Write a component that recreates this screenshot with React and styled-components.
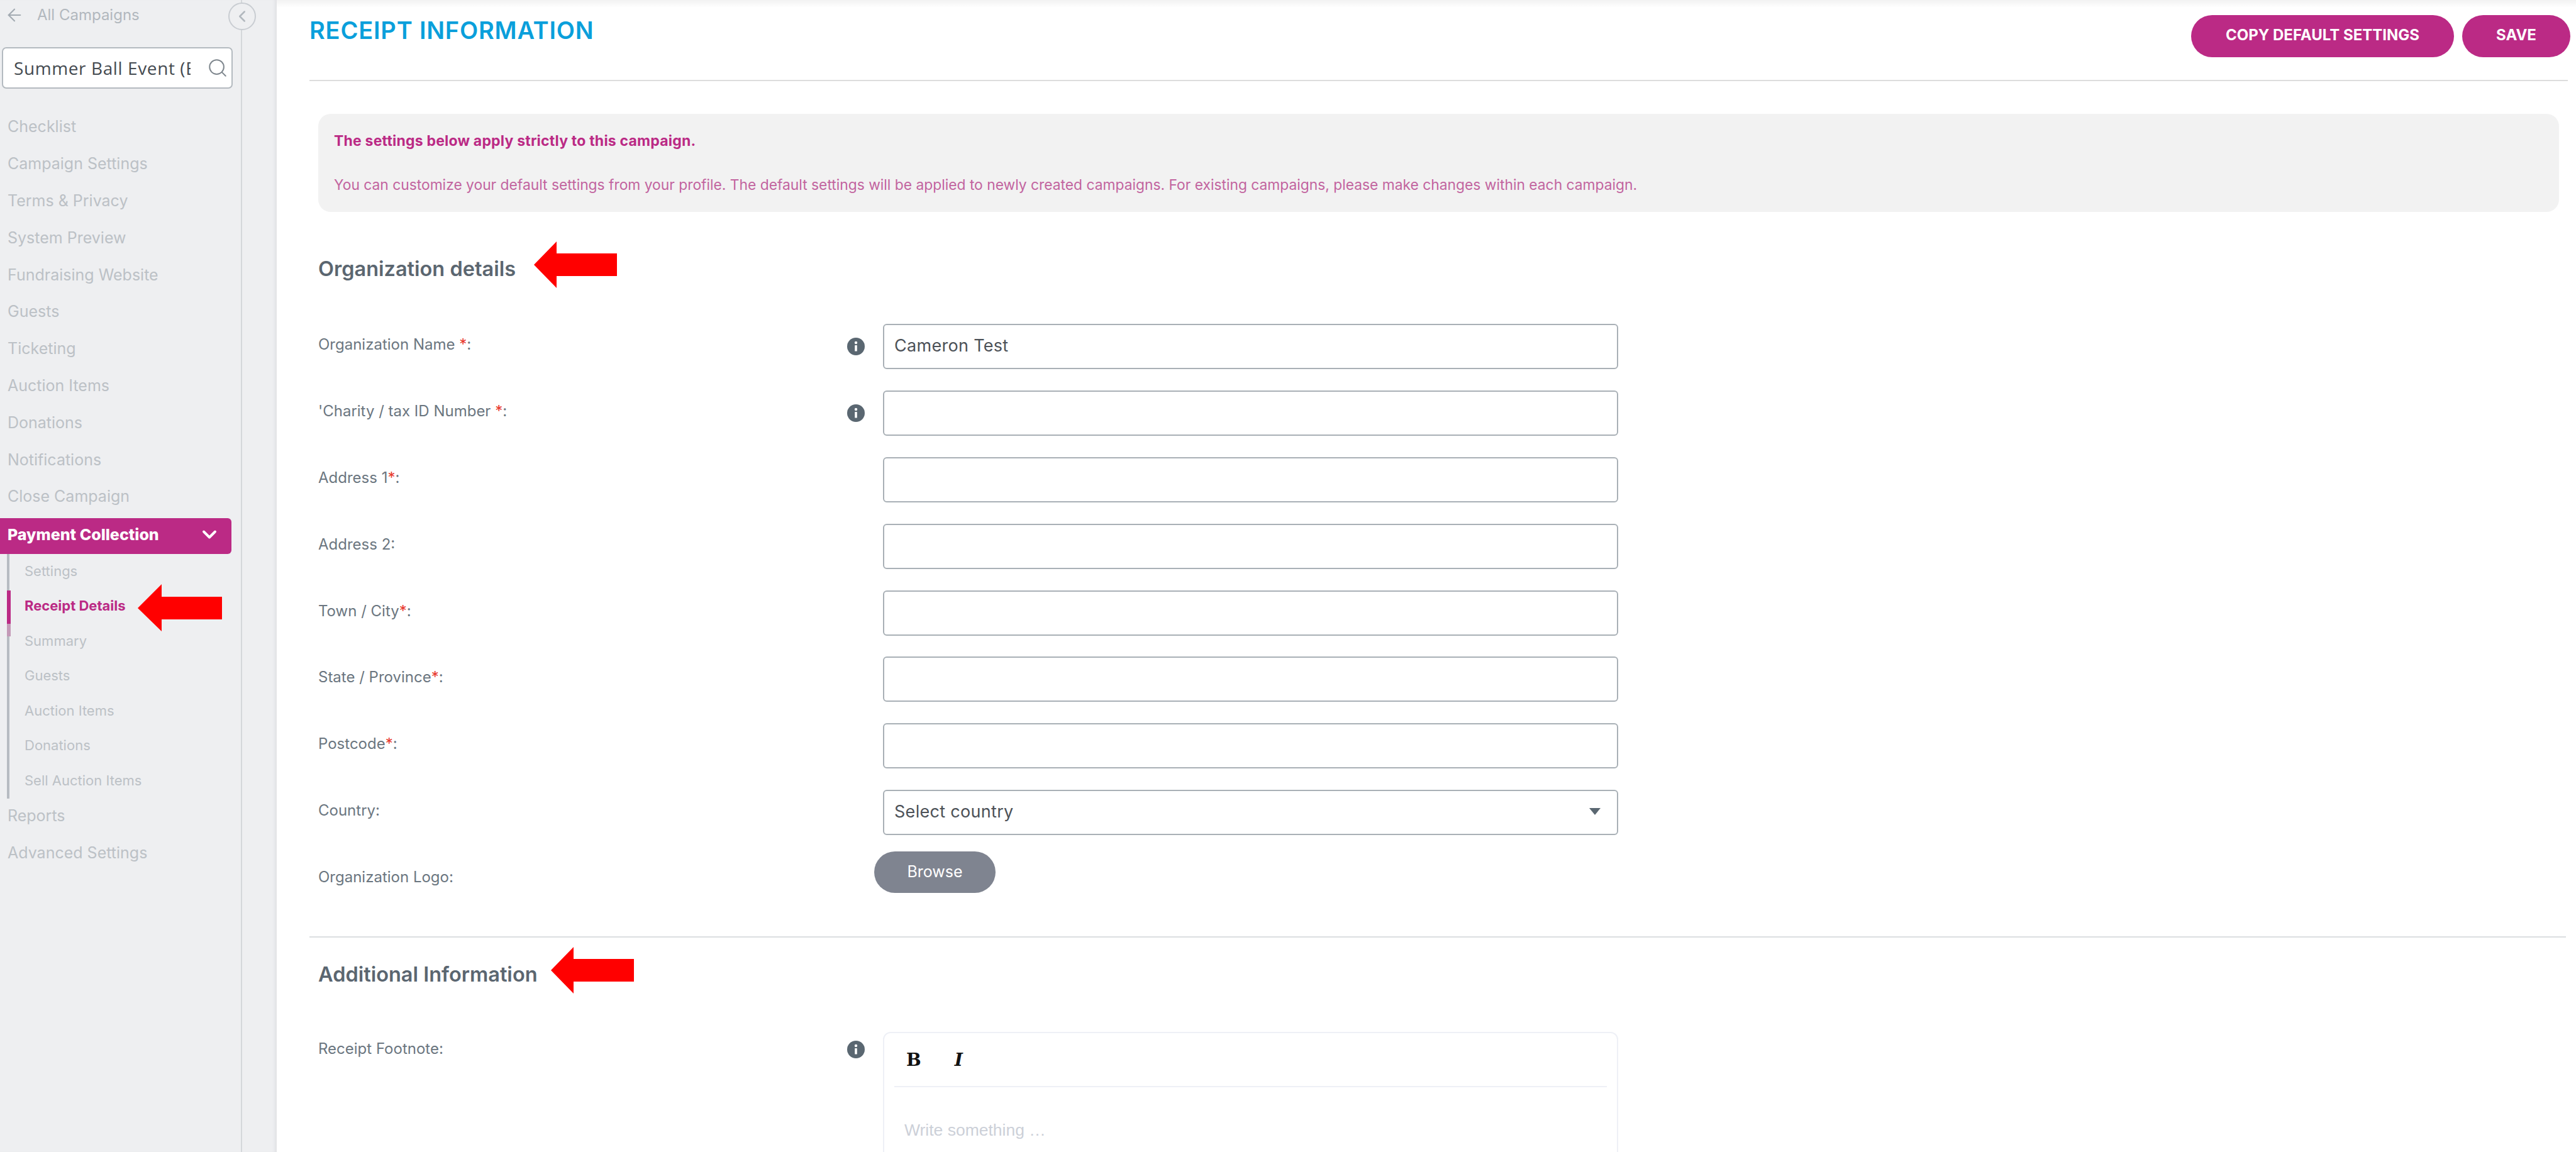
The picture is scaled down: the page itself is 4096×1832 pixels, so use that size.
import React from "react";
import styled, { createGlobalStyle } from "styled-components";
import { ArrowLeft, ChevronLeft, ChevronDown, Search } from "lucide-react";

const Global = createGlobalStyle`
  html, body { margin: 0; padding: 0; background: #fff; }
  * { box-sizing: border-box; }
  body { font-family: Inter, "Liberation Sans", sans-serif; }
`;

const Page = styled.div`
  position: relative;
  display: flex;
  width: 4096px;
  height: 1832px;
  overflow: hidden;
  background: #fff;
  &::before {
    content: "";
    position: absolute;
    left: 0;
    right: 0;
    top: 0;
    height: 12px;
    background: linear-gradient(rgba(0, 0, 0, 0.05), rgba(0, 0, 0, 0));
  }
`;

const Sidebar = styled.aside`
  position: relative;
  flex: none;
  width: 440px;
  background: #eeeff1;
  box-shadow: inset -6px 0 5px -3px #e0e1e4;
`;

const Column = styled.div`
  width: 385px;
  height: 100%;
  border-right: 2px solid #d5d8db;
`;

const Back = styled.div`
  display: flex;
  align-items: center;
  gap: 20px;
  height: 47px;
  padding-left: 7px;
  color: #b2b8be;
  font-size: 24px;
`;

const Collapse = styled.div`
  position: absolute;
  left: 363px;
  top: 4px;
  width: 44px;
  height: 44px;
  display: flex;
  align-items: center;
  justify-content: center;
  border: 2px solid #c9cdd2;
  border-radius: 50%;
  background: #eeeff1;
  color: #b2b8be;
`;

const SearchBox = styled.div`
  display: flex;
  align-items: center;
  justify-content: space-between;
  width: 367px;
  height: 66px;
  margin: 28px 0 31px 3px;
  padding: 0 5px 0 17px;
  background: #fff;
  border: 2px solid #b4bac0;
  border-radius: 7px;
  color: #444a50;
`;

const SearchText = styled.div`
  width: 281px;
  overflow: hidden;
  white-space: nowrap;
  font-family: "Open Sans", sans-serif;
  font-size: 28px;
  letter-spacing: 0.6px;
`;

const NavItem = styled.div`
  display: flex;
  align-items: center;
  height: 58.8px;
  padding-left: 12px;
  color: #bcc1c6;
  font-size: 25px;
`;

const ActiveBar = styled.div`
  display: flex;
  align-items: center;
  justify-content: space-between;
  width: 368px;
  height: 57px;
  margin-top: 5.6px;
  padding: 0 17px 6px 12px;
  background: #bb2a85;
  border-radius: 0 6px 6px 0;
  color: #fff;
  font-size: 25px;
  font-weight: 800;
`;

const SubList = styled.div`
  width: 200px;
  margin: 0 0 -2.5px 11px;
  border-left: 4px solid #b7bcc2;
`;

const SubItem = styled.div`
  position: relative;
  display: flex;
  align-items: center;
  height: 55.5px;
  padding: 0 0 3px 24px;
  white-space: nowrap;
  color: ${(p) => (p.$active ? "#bb2a85" : "#bcc1c6")};
  font-size: 22px;
  font-weight: ${(p) => (p.$active ? 700 : 400)};
  ${(p) =>
    p.$active &&
    `
    &::before {
      content: "";
      position: absolute;
      left: -4px;
      top: 2px;
      bottom: 0;
      width: 6px;
      background: #bb2a85;
    }
    &::after {
      content: "";
      position: absolute;
      left: -4px;
      top: 100%;
      height: 20px;
      width: 6px;
      background: #c49ab8;
    }
  `}
`;

const SideArrow = styled.svg`
  position: absolute;
  left: 219px;
  top: 929px;
`;

const Main = styled.main`
  flex: 1;
  min-width: 0;
  padding: 0 13px 0 52px;
`;

const Header = styled.header`
  display: flex;
  align-items: flex-start;
  justify-content: space-between;
  height: 129px;
  padding-top: 24px;
  border-bottom: 2px solid #dddddd;
`;

const Title = styled.h1`
  margin: 0;
  color: #0a9fdb;
  font-size: 38px;
  font-weight: 600;
  letter-spacing: 0.8px;
  line-height: 48px;
  white-space: nowrap;
`;

const Actions = styled.div`
  display: flex;
  gap: 13px;
  margin-right: -4px;
`;

const PillButton = styled.button`
  height: 67px;
  width: ${(p) => p.$width}px;
  padding: 0 0 4px;
  border: 0;
  border-radius: 34px;
  background: #bb2a85;
  color: #fff;
  font-family: inherit;
  font-size: 24px;
  font-weight: 700;
`;

const Notice = styled.section`
  display: flex;
  flex-direction: column;
  gap: 42px;
  height: 156px;
  margin: 52px 14px 0;
  padding: 29px 25px 0;
  background: #f2f2f2;
  border-radius: 20px;
  color: #bb2a85;
  line-height: 28px;
`;

const NoticeStrong = styled.div`
  font-size: 23px;
  font-weight: 700;
  letter-spacing: 0.2px;
`;

const NoticeText = styled.div`
  font-size: 22.8px;
  color: #c2649f;
`;

const Heading = styled.h2`
  display: flex;
  align-items: center;
  gap: ${(p) => p.$gap}px;
  height: 40px;
  margin: ${(p) => p.$top}px 0 0 14px;
  color: #5b6670;
  font-size: 32.5px;
  font-weight: 600;
`;

const RedArrow = styled.svg`
  flex: none;
  margin-top: -12px;
`;

const Form = styled.div`
  display: flex;
  flex-direction: column;
  gap: 33.9px;
  margin: ${(p) => p.$top}px 0 0 14px;
`;

const Row = styled.div`
  display: grid;
  grid-template-columns: 841px 57px 1169px;
  align-items: ${(p) => (p.$top ? "start" : "center")};
  margin-top: ${(p) => p.$shift || 0}px;
`;

const Label = styled.div`
  margin-top: ${(p) => p.$offset || -6}px;
  color: #6b7680;
  font-size: 24px;
  line-height: 28px;
`;

const Required = styled.span`
  color: #e8372b;
`;

const InfoIcon = styled.svg`
  display: block;
  margin-top: ${(p) => p.$offset || 0}px;
`;

const Input = styled.input`
  display: block;
  width: 1169px;
  height: 72px;
  padding: 0 16px 3px;
  background: #fff;
  border: 2px solid #a9b0b6;
  border-radius: 6px;
  color: #4c5157;
  font-family: inherit;
  font-size: 27px;
  letter-spacing: 0.3px;
  outline: none;
`;

const SelectBox = styled.div`
  display: flex;
  align-items: center;
  justify-content: space-between;
  width: 1169px;
  height: 72px;
  padding: 0 26px 3px 16px;
  border: 2px solid #a9b0b6;
  border-radius: 6px;
  color: #4c5157;
  font-size: 27px;
  letter-spacing: 0.3px;
`;

const BrowseButton = styled.button`
  width: 193px;
  height: 66px;
  margin: 0 0 0 -14px;
  padding: 0 0 3px;
  border: 0;
  border-radius: 33px;
  background: #7f8490;
  color: #fff;
  font-family: inherit;
  font-size: 25px;
`;

const Rule = styled.hr`
  height: 2px;
  margin: 69px 3px 0 0;
  border: 0;
  background: #dcdfe1;
`;

const Editor = styled.div`
  width: 1169px;
  height: 320px;
  border: 2px solid #eef0f6;
  border-radius: 12px;
`;

const Toolbar = styled.div`
  display: flex;
  align-items: center;
  gap: 53px;
  height: 86px;
  margin: 0 16px;
  padding-left: 19px;
  border-bottom: 2px solid #eef0f6;
  color: #111;
  font-family: "DejaVu Serif", serif;
  font-size: 28px;
  font-weight: 700;
`;

const ToolI = styled.span`
  font-style: italic;
`;

const Placeholder = styled.div`
  padding: 51px 0 0 32px;
  color: #ccd0d8;
  font-family: "Liberation Sans", sans-serif;
  font-size: 26.5px;
  line-height: 34px;
`;

const Info = ({ offset }) => (
  <InfoIcon $offset={offset} width="28" height="28" viewBox="0 0 28 28">
    <circle cx="14" cy="14" r="14" fill="#5a6771" />
    <circle cx="14" cy="8" r="2.2" fill="#fff" />
    <rect x="12.2" y="12" width="3.6" height="9.5" rx="0.6" fill="#fff" />
  </InfoIcon>
);

const Arrow = ({ w, h, head, shaftTop, shaftBottom }) => (
  <RedArrow width={w} height={h} viewBox={`0 0 ${w} ${h}`}>
    <polygon
      fill="#ff0000"
      points={`0,${h / 2} ${head},0 ${head},${shaftTop} ${w},${shaftTop} ${w},${shaftBottom} ${head},${shaftBottom} ${head},${h}`}
    />
  </RedArrow>
);

const navTop = ["Checklist", "Campaign Settings", "Terms & Privacy", "System Preview", "Fundraising Website", "Guests", "Ticketing", "Auction Items", "Donations", "Notifications", "Close Campaign"];
const subItems = ["Settings", "Receipt Details", "Summary", "Guests", "Auction Items", "Donations", "Sell Auction Items"];
const rows = [
  { label: "Organization Name ", req: " ", info: true, value: "Cameron Test" },
  { label: "'Charity / tax ID Number ", req: " ", info: true },
  { label: "Address 1", req: "" },
  { label: "Address 2:" },
  { label: "Town / City", req: "" },
  { label: "State / Province", req: "" },
  { label: "Postcode", req: "" },
];

export default function App() {
  return (
    <Page>
      <Global />
      <Sidebar>
        <Column>
          <Back>
            <ArrowLeft size={32} strokeWidth={1.6} color="#a3abb2" />
            All Campaigns
          </Back>
          <SearchBox>
            <SearchText>Summer Ball Event (E</SearchText>
            <Search size={34} strokeWidth={1.4} color="#7f878e" />
          </SearchBox>
          {navTop.map((t) => (
            <NavItem key={t}>{t}</NavItem>
          ))}
          <ActiveBar>
            Payment Collection
            <ChevronDown size={36} strokeWidth={2.6} />
          </ActiveBar>
          <SubList>
            {subItems.map((t, i) => (
              <SubItem key={t} $active={i === 1}>{t}</SubItem>
            ))}
          </SubList>
          <NavItem>Reports</NavItem>
          <NavItem>Advanced Settings</NavItem>
        </Column>
        <Collapse>
          <ChevronLeft size={30} strokeWidth={2} />
        </Collapse>
        <SideArrow width="134" height="75" viewBox="0 0 134 75">
          <polygon fill="#ff0000" points="0,38 38,0 38,20 134,20 134,56 38,56 38,75" />
        </SideArrow>
      </Sidebar>
      <Main>
        <Header>
          <Title>RECEIPT INFORMATION</Title>
          <Actions>
            <PillButton $width={418}>COPY DEFAULT SETTINGS</PillButton>
            <PillButton $width={172}>SAVE</PillButton>
          </Actions>
        </Header>
        <Notice>
          <NoticeStrong>The settings below apply strictly to this campaign.</NoticeStrong>
          <NoticeText>
            You can customize your default settings from your profile. The default settings will be applied to newly created campaigns. For existing campaigns, please make changes within each campaign.
          </NoticeText>
        </Notice>
        <Heading $top={70} $gap={29}>
          Organization details
          <Arrow w={132} h={74} head={36} shaftTop={19} shaftBottom={55} />
        </Heading>
        <Form $top={68}>
          {rows.map((r) => (
            <Row key={r.label}>
              <Label>
                {r.label}
                {r.req !== undefined && <Required>*</Required>}
                {r.req !== undefined && ":"}
              </Label>
              <div>{r.info && <Info />}</div>
              <Input defaultValue={r.value || ""} readOnly />
            </Row>
          ))}
          <Row>
            <Label>Country:</Label>
            <div />
            <SelectBox>
              Select country
              <svg width="18" height="11" viewBox="0 0 18 11">
                <polygon points="0,0 18,0 9,11" fill="#5a6771" />
              </svg>
            </SelectBox>
          </Row>
          <Row $top $shift={-8}>
            <Label $offset={27}>Organization Logo:</Label>
            <div />
            <BrowseButton>Browse</BrowseButton>
          </Row>
        </Form>
        <Rule />
        <Heading $top={38} $gap={21}>
          Additional Information
          <Arrow w={132} h={74} head={36} shaftTop={19} shaftBottom={55} />
        </Heading>
        <Form $top={72}>
          <Row $top>
            <Label $offset={13}>Receipt Footnote:</Label>
            <Info offset={14} />
            <Editor>
              <Toolbar>
                <span>B</span>
                <ToolI>I</ToolI>
              </Toolbar>
              <Placeholder>Write something …</Placeholder>
            </Editor>
          </Row>
        </Form>
      </Main>
    </Page>
  );
}
